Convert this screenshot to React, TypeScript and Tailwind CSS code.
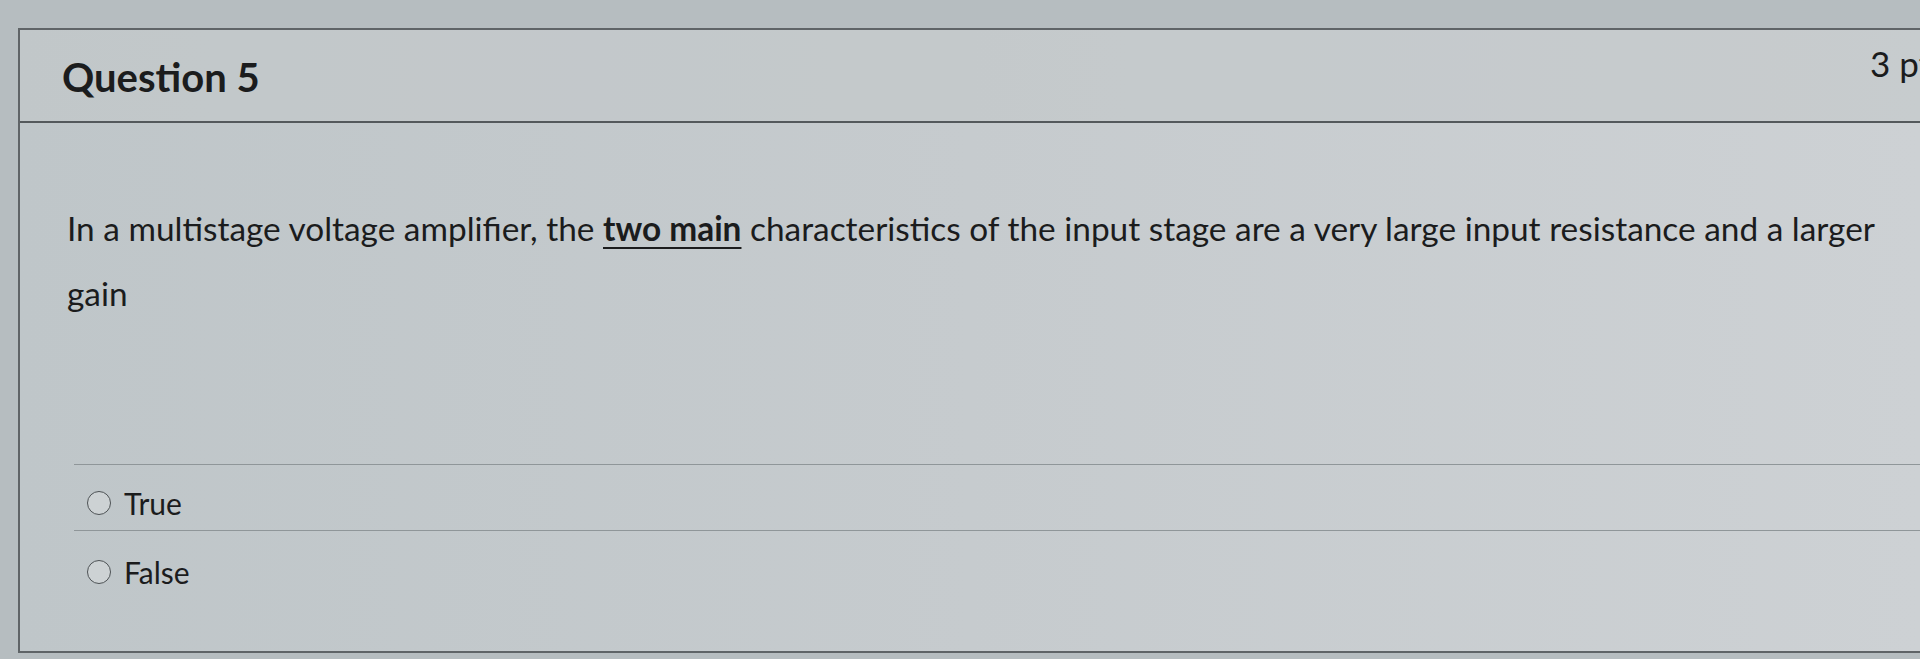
export default function App() {
  const answers = [
    { label: 'True', row: 'h-[66px] pt-[10px]' },
    { label: 'False', row: 'h-[80px] pt-[2px]' },
  ];

  return (
    <div className="w-[1920px] h-[659px] overflow-hidden bg-[#b6bdc0] pt-[28px] pl-[18px] font-['Lato','Liberation_Sans',sans-serif] text-[#1b1c1d]">
      <div className="h-[625px] border-l-2 border-t-2 border-b-2 border-[#5f6467] bg-gradient-to-r from-[#bfc6c9] via-[#c6cbce] to-[#cdd1d4]">
        {/* Header */}
        <div className="h-[93px] flex border-b-2 border-[#54595c] bg-[#c3c8ca]/60">
          <h2 className="flex-1 pl-[42px] pt-[22px] text-[40px] font-bold leading-[50px]">Question 5</h2>
          <span className="w-[50px] shrink-0 overflow-hidden whitespace-nowrap pt-[9px] text-[35px] leading-[48px]">
            3 pts
          </span>
        </div>

        {/* Body */}
        <div className="pl-[47px] pt-[73px]">
          <p className="text-[33.4px] leading-[65px] pr-[10px]">
            In a multistage voltage amplifier, the{' '}
            <span className="font-bold underline decoration-2 underline-offset-[6px]">two main</span> characteristics of
            the input stage are a very large input resistance and a larger gain
          </p>
        </div>

        {/* Answers */}
        <div className="mt-[138px] ml-[54px]">
          {answers.map((a) => (
            <div key={a.label} className={`${a.row} flex items-center gap-[13px] pl-[13px] border-t border-[#8f9699]`}>
              <span className="w-[24px] h-[24px] rounded-full border-[1.5px] border-[#4d5255] bg-[#cdd2d4]" />
              <span className="text-[30px] leading-[36px]">{a.label}</span>
            </div>
          ))}
        </div>
      </div>
    </div>
  );
}
